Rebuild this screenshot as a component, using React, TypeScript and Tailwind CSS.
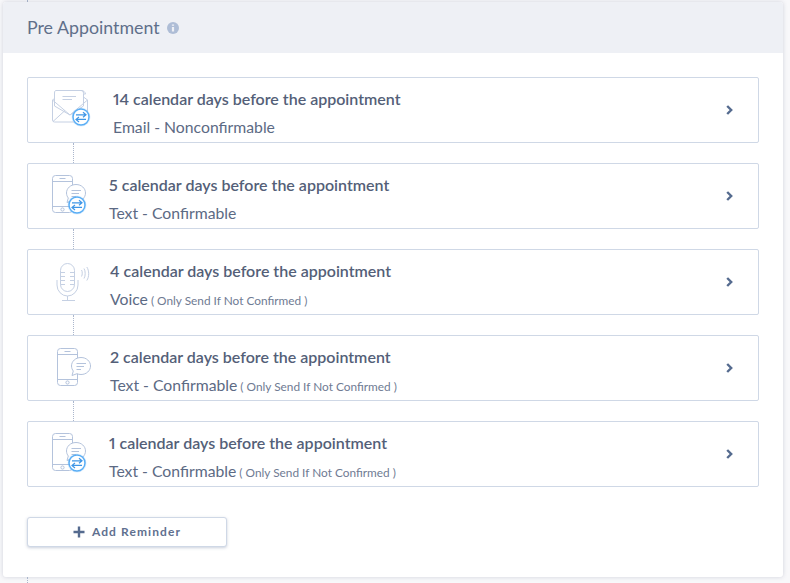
import React from 'react';

const SwapBadge = () => (
  <g>
    <circle cx="0" cy="0" r="9.500" fill="#5aaef5" opacity="0.18" />
    <circle cx="0" cy="0" r="8" fill="#fff" stroke="#5aaef5" strokeWidth="1.500" />
    <path d="M-5-2.200H4.500M2-4.800 5-2.200 2 .2" fill="none" stroke="#3f96e6" strokeWidth="1.200" />
    <path d="M5 2.400H-4.500M-2 0-5 2.400-2 5" fill="none" stroke="#3f96e6" strokeWidth="1.200" />
  </g>
);

const Phone = () => (
  <>
    <rect x="0.500" y="0.500" width="20" height="37" rx="3" fill="none" stroke="#b4c3dc" strokeWidth="1" />
    <path d="M.5 6.500H20.500M.5 31.500H20.500M7.500 3.500H13.500" fill="none" stroke="#b4c3dc" strokeWidth="1" />
    <circle cx="10.500" cy="34.500" r="1.600" fill="none" stroke="#b4c3dc" strokeWidth="1" />
  </>
);

const Bubble = () => (
  <>
    <path
      d="M24 9.500c5.400 0 9.500 3.800 9.500 8.500s-4.100 8.500-9.500 8.500c-1.500 0-2.800-.3-4-.8L15 27.500l1.300-4.500c-1-1.300-1.800-3-1.800-5 0-4.700 4.100-8.500 9.500-8.500z"
      fill="#fff"
      stroke="#b4c3dc"
      strokeWidth="1"
    />
    <path d="M19.500 15.500H29M19.500 18.500H27M19.500 21.500H24" fill="none" stroke="#b4c3dc" strokeWidth="1" />
  </>
);

const EmailIcon = () => (
  <svg width="40" height="38" viewBox="0 0 40 38">
    <path d="M.5 11V31a2 2 0 0 0 2 2H33.500a2 2 0 0 0 2-2V11" fill="none" stroke="#c5d0e3" strokeWidth="1" />
    <path d="M2.500 4V17L18 26 31.500 17V4.500C31.500 2 30.500 1.500 29 1.500H4C3 1.500 2.500 2.500 2.500 4z" fill="#fff" stroke="#c5d0e3" strokeWidth="1" />
    <path d="M29 1.500c2.500 0 4 1.200 4.500 3.500H31.500M.5 11 2.500 9.500M35.500 11 31.500 8M1 32.500 13 21.500M35 32.500 23 21.500M.5 11 18 26 35.500 11" fill="none" stroke="#c5d0e3" strokeWidth="1" />
    <path d="M10.500 7.500H24M10.500 10.500H20" fill="none" stroke="#c5d0e3" strokeWidth="1" />
    <g transform="translate(29 28)">
      <SwapBadge />
    </g>
  </svg>
);

const TextSwapIcon = () => (
  <svg width="38" height="42" viewBox="0 0 38 42">
    <Phone />
    <Bubble />
    <g transform="translate(25 30)">
      <SwapBadge />
    </g>
  </svg>
);

const TextIcon = () => (
  <svg width="34" height="40" viewBox="0 0 34 40">
    <Phone />
    <Bubble />
  </svg>
);

const VoiceIcon = () => (
  <svg width="34" height="38" viewBox="0 0 34 38" fill="none" stroke="#c5d0e3" strokeWidth="1">
    <rect x="4.500" y="0.500" width="14" height="28" rx="7" />
    <path d="M4.500 9.500H9M14 9.500H18.500M4.500 13.500H9M14 13.500H18.500M4.500 17.500H9M14 17.500H18.500M4.500 21.500H9M14 21.500H18.500" />
    <path d="M1 17V22a10.500 11 0 0 0 21 0V17M11.500 33V37M6 37.500H19" />
    <path d="M25.500 7c1 1.300 1 5 0 6.500M28 5.500c1.600 2.500 1.600 7.500 0 10M30.800 4c2.500 3.500 2.500 10 0 13.500" />
  </svg>
);

const InfoIcon = () => (
  <svg width="12" height="12" viewBox="0 0 12 12" className="ml-[7px] mt-[1px]">
    <circle cx="6" cy="6" r="6" fill="#aebdd6" />
    <path d="M6 2.500V3.700M6 5V9.500" stroke="#eef0f5" strokeWidth="2.200" />
  </svg>
);

const Chevron = () => (
  <svg width="8" height="10" viewBox="0 0 8 10" className="ml-auto mr-[24px] shrink-0">
    <path d="M1.200 1 5.200 5 1.200 9" fill="none" stroke="#556b8f" strokeWidth="2.400" />
  </svg>
);

type Reminder = {
  days: number;
  kind: string;
  note?: boolean;
  icon: React.ReactNode;
  iconSlot: string;
};

const NOTE = '( Only Send If Not Confirmed )';

const reminders: Reminder[] = [
  { days: 14, kind: 'Email - Nonconfirmable', icon: <EmailIcon />, iconSlot: 'w-[85px] pl-[24px] pt-[11px]' },
  { days: 5, kind: 'Text - Confirmable', icon: <TextSwapIcon />, iconSlot: 'w-[81px] pl-[24px] pt-[11px]' },
  { days: 4, kind: 'Voice', note: true, icon: <VoiceIcon />, iconSlot: 'w-[82px] pl-[28px] pt-[13px]' },
  { days: 2, kind: 'Text - Confirmable', note: true, icon: <TextIcon />, iconSlot: 'w-[82px] pl-[29px] pt-[12px]' },
  { days: 1, kind: 'Text - Confirmable', note: true, icon: <TextSwapIcon />, iconSlot: 'w-[81px] pl-[24px] pt-[11px]' },
];

const ReminderRow: React.FC<{ reminder: Reminder }> = ({ reminder }) => (
  <div className="flex h-[66px] items-center rounded-[2px] border border-[#cfd8e6] bg-white">
    <div className={`h-full shrink-0 ${reminder.iconSlot}`}>{reminder.icon}</div>
    <div className="pt-[6px]">
      <div className="text-[16px] leading-[20px] font-semibold text-[#545f78] proportional-nums">
        {reminder.days} calendar days before the appointment
      </div>
      <div className="mt-[8px] flex h-[20px] items-baseline leading-[20px] text-[#5c6a84]">
        <span className="text-[15.75px]">{reminder.kind}</span>
        {reminder.note && <span className="ml-[3px] text-[11.85px] text-[#6f7b93]">{NOTE}</span>}
      </div>
    </div>
    <Chevron />
  </div>
);

const Dots: React.FC<{ className: string }> = ({ className }) => (
  <div className={`w-0 border-l border-dotted border-[#aab6cc] ${className}`} />
);

export default function App() {
  return (
    <div className="h-[583px] w-[790px] overflow-hidden bg-[#f8f8fa] font-['Lato','Noto_Sans',sans-serif]">
      <Dots className="ml-[27px] h-[2px]" />
      <div className="ml-[3px] h-[575px] w-[780px] rounded-[3px] bg-white shadow-[0_0_4px_rgba(90,100,130,0.25)]">
        <div className="flex h-[51px] items-center rounded-t-[3px] bg-[#eef0f5] pl-[24px]">
          <span className="text-[17.8px] text-[#5f6f8a]">Pre Appointment</span>
          <InfoIcon />
        </div>
        <div className="px-[24px] pt-[24px]">
          {reminders.map((reminder, i) => (
            <React.Fragment key={reminder.days}>
              {i > 0 && <Dots className="ml-[46px] h-[20px]" />}
              <ReminderRow reminder={reminder} />
            </React.Fragment>
          ))}
          <button className="mt-[30px] flex h-[30px] w-[200px] items-center justify-center rounded-[3px] border border-[#cfd8e6] bg-white text-[12px] font-bold tracking-[1.1px] text-[#60708f] shadow-[0_1px_3px_rgba(80,100,140,0.3)]">
            <svg width="12" height="12" viewBox="0 0 12 12" className="mr-[7px]">
              <path d="M6 .5V11.500M.5 6H11.500" stroke="#556b8f" strokeWidth="2.400" />
            </svg>
            Add Reminder
          </button>
        </div>
      </div>
      <Dots className="ml-[27px] h-[6px]" />
    </div>
  );
}
